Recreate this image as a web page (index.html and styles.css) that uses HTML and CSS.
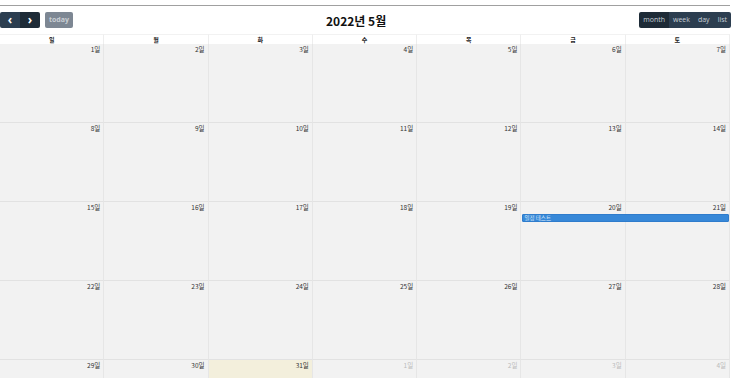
FILE: index.html
```html
<!DOCTYPE html>
<html>
  <head>
    <title>Calendar</title>
    <link rel="stylesheet" href="styles.css">
  </head>
  <body>
    <div class="calendar">
      <div class="toolbar">
        <div class="toolbar-left">
          <div class="btn-group nav">
            <button class="btn">&lsaquo;</button>
            <button class="btn active">&rsaquo;</button>
          </div>
          <button class="btn today" disabled>today</button>
        </div>
        <h2 class="title">2022년 5월</h2>
        <div class="toolbar-right">
          <div class="btn-group views">
            <button class="btn active">month</button>
            <button class="btn">week</button>
            <button class="btn">day</button>
            <button class="btn">list</button>
          </div>
        </div>
      </div>

      <div class="day-header">
        <div>일</div>
        <div>월</div>
        <div>화</div>
        <div>수</div>
        <div>목</div>
        <div>금</div>
        <div>토</div>
      </div>

      <div class="month">
        <div class="week">
          <div class="day" style="grid-column: 1">1일</div>
          <div class="day" style="grid-column: 2">2일</div>
          <div class="day" style="grid-column: 3">3일</div>
          <div class="day" style="grid-column: 4">4일</div>
          <div class="day" style="grid-column: 5">5일</div>
          <div class="day" style="grid-column: 6">6일</div>
          <div class="day" style="grid-column: 7">7일</div>
        </div>
        <div class="week">
          <div class="day" style="grid-column: 1">8일</div>
          <div class="day" style="grid-column: 2">9일</div>
          <div class="day" style="grid-column: 3">10일</div>
          <div class="day" style="grid-column: 4">11일</div>
          <div class="day" style="grid-column: 5">12일</div>
          <div class="day" style="grid-column: 6">13일</div>
          <div class="day" style="grid-column: 7">14일</div>
        </div>
        <div class="week">
          <div class="day" style="grid-column: 1">15일</div>
          <div class="day" style="grid-column: 2">16일</div>
          <div class="day" style="grid-column: 3">17일</div>
          <div class="day" style="grid-column: 4">18일</div>
          <div class="day" style="grid-column: 5">19일</div>
          <div class="day" style="grid-column: 6">20일</div>
          <div class="day" style="grid-column: 7">21일</div>
          <div class="event" style="grid-column: 6 / 8">일정 테스트</div>
        </div>
        <div class="week">
          <div class="day" style="grid-column: 1">22일</div>
          <div class="day" style="grid-column: 2">23일</div>
          <div class="day" style="grid-column: 3">24일</div>
          <div class="day" style="grid-column: 4">25일</div>
          <div class="day" style="grid-column: 5">26일</div>
          <div class="day" style="grid-column: 6">27일</div>
          <div class="day" style="grid-column: 7">28일</div>
        </div>
        <div class="week">
          <div class="day" style="grid-column: 1">29일</div>
          <div class="day" style="grid-column: 2">30일</div>
          <div class="day today-cell" style="grid-column: 3">31일</div>
          <div class="day other" style="grid-column: 4">1일</div>
          <div class="day other" style="grid-column: 5">2일</div>
          <div class="day other" style="grid-column: 6">3일</div>
          <div class="day other" style="grid-column: 7">4일</div>
        </div>
      </div>
    </div>
  </body>
</html>
```

FILE: styles.css
```css
body {
  margin: 0;
  font-family: "Noto Sans CJK KR", "Noto Sans", sans-serif;
  background-color: #fff;
}

.calendar {
  margin-top: 5px;
  border-top: 1px solid #a0a0a0;
  width: 730px;
}

.toolbar {
  display: flex;
  align-items: center;
  justify-content: space-between;
  height: 28px;
}

.toolbar-left,
.toolbar-right {
  display: flex;
  align-items: center;
}

.toolbar-left {
  gap: 5px;
}

.btn-group {
  display: flex;
}

.btn {
  font-family: "Open Sans", sans-serif;
  height: 16px;
  padding: 0 5px;
  border: none;
  background-color: #2c3e50;
  color: #c8d0d8;
  font-size: 7px;
  line-height: 16px;
  cursor: pointer;
}

.btn-group .btn:first-child {
  border-radius: 2px 0 0 2px;
}

.btn-group .btn:last-child {
  border-radius: 0 2px 2px 0;
}

.btn.active {
  background-color: #1e2b37;
}

.nav .btn {
  width: 20px;
  padding: 0;
  font-size: 12px;
  font-weight: bold;
  color: #fff;
  line-height: 14px;
}

.views {
  margin-right: -1px;
}

.views .btn {
  padding: 0 4px;
}

.btn.today {
  width: 28px;
  padding: 0;
  border-radius: 2px;
  background-color: #7d8793;
  color: #c9ced4;
  font-weight: bold;
}

.title {
  margin: 0;
  font-size: 12px;
  font-weight: bold;
  color: #111;
}

.day-header {
  display: grid;
  grid-template-columns: repeat(7, 1fr);
  height: 10px;
}

.day-header div {
  border-right: 1px solid #eee;
  border-top: 1px solid #f2f2f2;
  font-size: 6px;
  font-weight: bold;
  text-align: center;
  line-height: 9px;
  color: #222;
}

.week {
  display: grid;
  grid-template-columns: repeat(7, 1fr);
  grid-template-rows: 12px 8px 59px;
}

.day {
  grid-row: 1 / -1;
  background-color: #f2f2f2;
  border-right: 1px solid #e6e6e6;
  border-bottom: 1px solid #e2e2e2;
  font-size: 6.5px;
  line-height: 9px;
  color: #333;
  text-align: right;
  padding: 1px 3px 0 0;
}

.day.today-cell {
  background-color: #f3efdc;
}

.day.other {
  color: #bbb;
}

.event {
  grid-row: 2;
  margin: 0 1px;
  background-color: #3788d8;
  border: 1px solid #2f7ccc;
  border-radius: 1px;
  color: #dbe9f8;
  font-size: 5.5px;
  line-height: 6px;
  padding-left: 1px;
  z-index: 1;
}
```
